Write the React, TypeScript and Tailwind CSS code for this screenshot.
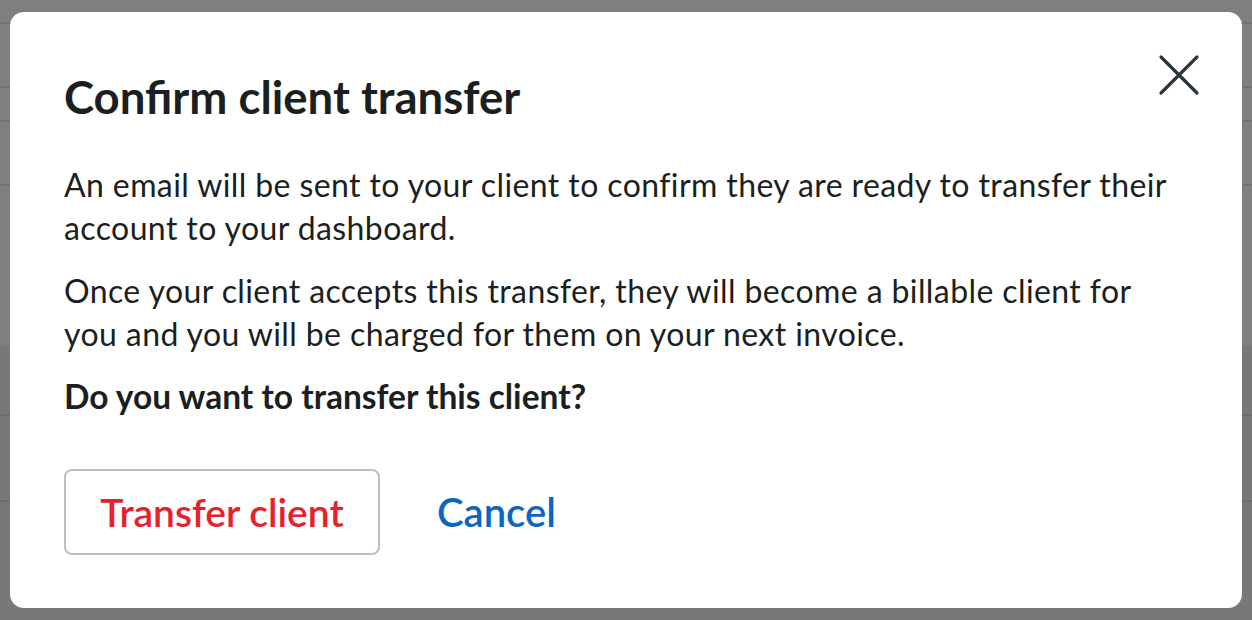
import React from 'react';

const CloseIcon = () => (
  <svg width="42" height="42" viewBox="0 0 42 42" fill="none">
    <path
      d="M3 3L39 39M39 3L3 39"
      stroke="#2b363b"
      strokeWidth="3.2"
      strokeLinecap="round"
    />
  </svg>
);

export default function App() {
  return (
    <div
      className="relative w-[1252px] h-[620px] overflow-hidden bg-[#7f7f7f]"
      style={{ fontFamily: 'Lato, "Noto Sans", sans-serif' }}
    >
      {/* page behind the overlay */}
      <div className="absolute inset-0 flex flex-col">
        <div className="h-[24px] border-b-2 border-[#727272]" />
        <div className="h-[64px] border-b-2 border-[#727272]" />
        <div className="h-[34px] border-b-2 border-[#727272]" />
        <div className="h-[64px] border-b-2 border-[#727272]" />
        <div className="h-[160px]" />
        <div className="h-[70px] bg-[#787878] border-b-2 border-[#6c6c6c]" />
        <div className="h-[86px] bg-[#787878] border-b-2 border-[#6c6c6c] text-[#1d4f7d] text-[28px] flex items-center -ml-[14px]">
          c
        </div>
        <div className="flex-1 bg-[#787878]" />
      </div>

      <div className="absolute left-[10px] top-[12px] w-[1232px] h-[596px] bg-white rounded-[14px] px-[54px] pt-[59px]">
        <button className="absolute right-[42px] top-[42px]">
          <CloseIcon />
        </button>
        <h2 className="text-[45.5px] leading-[52px] font-bold text-[#1b1f21]">
          Confirm client transfer
        </h2>
        <div className="mt-[40px] text-[32px] leading-[43px] tracking-[0.4px] text-[#1b1f21] whitespace-nowrap">
          <p>
            An email will be sent to your client to confirm they are ready to transfer their
            <br />
            account to your dashboard.
          </p>
          <p className="mt-[20px]">
            Once your client accepts this transfer, they will become a billable client for
            <br />
            you and you will be charged for them on your next invoice.
          </p>
          <p className="mt-[20px] text-[33.5px] tracking-normal font-bold">
            Do you want to transfer this client?
          </p>
        </div>
        <div className="mt-[51px] flex items-center gap-[57px]">
          <button className="w-[316px] h-[86px] rounded-[8px] border-2 border-[#b8c0c6] text-[39px] font-semibold text-[#e8202a]">
            Transfer client
          </button>
          <button className="text-[40px] font-semibold text-[#0a66c2]">Cancel</button>
        </div>
      </div>
    </div>
  );
}
